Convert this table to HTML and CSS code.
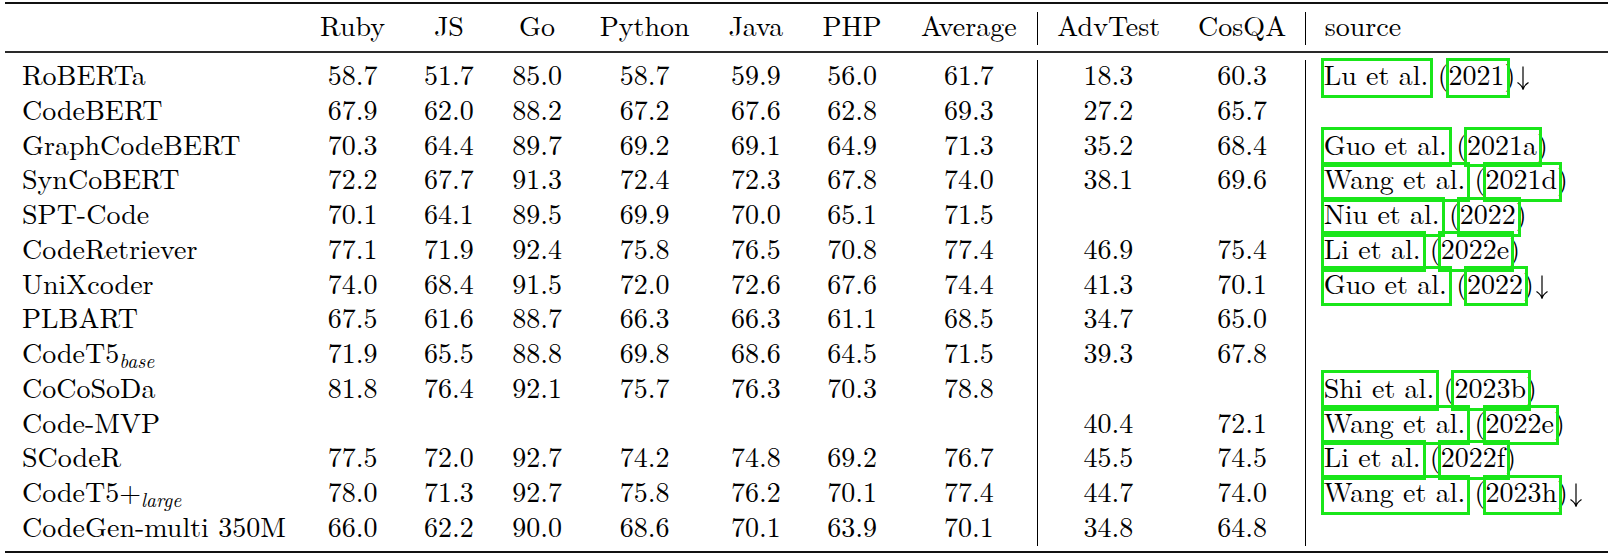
FILE: index.html
```html
<!DOCTYPE html>
<html lang="en">
<head>
<meta charset="utf-8">
<title>Code search results</title>
<link rel="stylesheet" href="styles.css">
</head>
<body>
<div class="table">
  <div class="rule rule-heavy"></div>
  <div class="thead">
    <div class="th"></div>
    <div class="th">Ruby</div>
    <div class="th">JS</div>
    <div class="th">Go</div>
    <div class="th">Python</div>
    <div class="th">Java</div>
    <div class="th">PHP</div>
    <div class="th">Average</div>
    <div class="th sep">AdvTest</div>
    <div class="th">CosQA</div>
    <div class="th sep src">source</div>
  </div>
  <div class="rule rule-mid"></div>
  <div class="tbody">
    <div class="vbar vbar1"></div>
    <div class="vbar vbar2"></div>

    <div class="n">RoBERTa</div><div class="v">58.7</div><div class="v">51.7</div><div class="v">85.0</div><div class="v">58.7</div><div class="v">59.9</div><div class="v">56.0</div><div class="v">61.7</div><div class="v">18.3</div><div class="v">60.3</div>
    <div class="s"><span class="ref">Lu et al.</span> (<span class="ref">2021</span>)<svg class="arr" viewBox="0 0 14 24" width="14" height="24"><path d="M7 0.5V23.2M1.5 16.5C4.5 18.5 6.3 20.5 7 23.5C7.7 20.5 9.5 18.5 12.5 16.5"/></svg></div>

    <div class="n">CodeBERT</div><div class="v">67.9</div><div class="v">62.0</div><div class="v">88.2</div><div class="v">67.2</div><div class="v">67.6</div><div class="v">62.8</div><div class="v">69.3</div><div class="v">27.2</div><div class="v">65.7</div>
    <div class="s"></div>

    <div class="n">GraphCodeBERT</div><div class="v">70.3</div><div class="v">64.4</div><div class="v">89.7</div><div class="v">69.2</div><div class="v">69.1</div><div class="v">64.9</div><div class="v">71.3</div><div class="v">35.2</div><div class="v">68.4</div>
    <div class="s"><span class="ref">Guo et al.</span> (<span class="ref">2021a</span>)</div>

    <div class="n">SynCoBERT</div><div class="v">72.2</div><div class="v">67.7</div><div class="v">91.3</div><div class="v">72.4</div><div class="v">72.3</div><div class="v">67.8</div><div class="v">74.0</div><div class="v">38.1</div><div class="v">69.6</div>
    <div class="s"><span class="ref">Wang et al.</span> (<span class="ref">2021d</span>)</div>

    <div class="n">SPT-Code</div><div class="v">70.1</div><div class="v">64.1</div><div class="v">89.5</div><div class="v">69.9</div><div class="v">70.0</div><div class="v">65.1</div><div class="v">71.5</div><div class="v"></div><div class="v"></div>
    <div class="s"><span class="ref">Niu et al.</span> (<span class="ref">2022</span>)</div>

    <div class="n">CodeRetriever</div><div class="v">77.1</div><div class="v">71.9</div><div class="v">92.4</div><div class="v">75.8</div><div class="v">76.5</div><div class="v">70.8</div><div class="v">77.4</div><div class="v">46.9</div><div class="v">75.4</div>
    <div class="s"><span class="ref">Li et al.</span> (<span class="ref">2022e</span>)</div>

    <div class="n">UniXcoder</div><div class="v">74.0</div><div class="v">68.4</div><div class="v">91.5</div><div class="v">72.0</div><div class="v">72.6</div><div class="v">67.6</div><div class="v">74.4</div><div class="v">41.3</div><div class="v">70.1</div>
    <div class="s"><span class="ref">Guo et al.</span> (<span class="ref">2022</span>)<svg class="arr" viewBox="0 0 14 24" width="14" height="24"><path d="M7 0.5V23.2M1.5 16.5C4.5 18.5 6.3 20.5 7 23.5C7.7 20.5 9.5 18.5 12.5 16.5"/></svg></div>

    <div class="n">PLBART</div><div class="v">67.5</div><div class="v">61.6</div><div class="v">88.7</div><div class="v">66.3</div><div class="v">66.3</div><div class="v">61.1</div><div class="v">68.5</div><div class="v">34.7</div><div class="v">65.0</div>
    <div class="s"></div>

    <div class="n">CodeT5<span class="sub">base</span></div><div class="v">71.9</div><div class="v">65.5</div><div class="v">88.8</div><div class="v">69.8</div><div class="v">68.6</div><div class="v">64.5</div><div class="v">71.5</div><div class="v">39.3</div><div class="v">67.8</div>
    <div class="s"></div>

    <div class="n">CoCoSoDa</div><div class="v">81.8</div><div class="v">76.4</div><div class="v">92.1</div><div class="v">75.7</div><div class="v">76.3</div><div class="v">70.3</div><div class="v">78.8</div><div class="v"></div><div class="v"></div>
    <div class="s"><span class="ref">Shi et al.</span> (<span class="ref">2023b</span>)</div>

    <div class="n">Code-MVP</div><div class="v"></div><div class="v"></div><div class="v"></div><div class="v"></div><div class="v"></div><div class="v"></div><div class="v"></div><div class="v">40.4</div><div class="v">72.1</div>
    <div class="s"><span class="ref">Wang et al.</span> (<span class="ref">2022e</span>)</div>

    <div class="n">SCodeR</div><div class="v">77.5</div><div class="v">72.0</div><div class="v">92.7</div><div class="v">74.2</div><div class="v">74.8</div><div class="v">69.2</div><div class="v">76.7</div><div class="v">45.5</div><div class="v">74.5</div>
    <div class="s"><span class="ref">Li et al.</span> (<span class="ref">2022f</span>)</div>

    <div class="n">CodeT5+<span class="sub">large</span></div><div class="v">78.0</div><div class="v">71.3</div><div class="v">92.7</div><div class="v">75.8</div><div class="v">76.2</div><div class="v">70.1</div><div class="v">77.4</div><div class="v">44.7</div><div class="v">74.0</div>
    <div class="s"><span class="ref">Wang et al.</span> (<span class="ref">2023h</span>)<svg class="arr" viewBox="0 0 14 24" width="14" height="24"><path d="M7 0.5V23.2M1.5 16.5C4.5 18.5 6.3 20.5 7 23.5C7.7 20.5 9.5 18.5 12.5 16.5"/></svg></div>

    <div class="n">CodeGen-multi 350M</div><div class="v">66.0</div><div class="v">62.2</div><div class="v">90.0</div><div class="v">68.6</div><div class="v">70.1</div><div class="v">63.9</div><div class="v">70.1</div><div class="v">34.8</div><div class="v">64.8</div>
    <div class="s"></div>
  </div>
  <div class="rule rule-heavy"></div>
</div>
</body>
</html>
```
FILE: styles.css
```css
html, body {
  margin: 0;
  padding: 0;
  background: #ffffff;
}

body {
  color: #000000;
  font-family: "Latin Modern Roman", "Liberation Serif", serif;
  font-size: 28px;
}

.table {
  margin: 2px 0 0 5px;
  width: 1602.8px;
}

.rule-heavy {
  height: 2px;
  background: #111111;
}

.rule-mid {
  height: 2px;
  background: #2a2a2a;
}

.thead {
  display: grid;
  grid-template-columns: 295.4px 104.4px 88.2px 88.2px 127px 95.3px 97.2px 136.4px 142.5px 125.2px 303px;
  padding-bottom: 6px;
}

.th {
  margin-top: 8px;
  height: 33px;
  line-height: 25px;
  text-align: center;
  white-space: nowrap;
}

.th.sep {
  border-left: 1px solid #000000;
}

.th.src {
  text-align: left;
  padding-left: 19px;
}

.tbody {
  display: grid;
  grid-template-columns: 295.4px 104.4px 88.2px 88.2px 127px 95.3px 97.2px 136.4px 0 142.5px 125.2px 0 303px;
  grid-template-rows: repeat(14, 34.75px);
  padding: 3.2px 0 8.2px;
  line-height: 34.75px;
}

.vbar {
  grid-row: 1 / 15;
  border-left: 1px solid #000000;
  margin: 3.8px 0 -3.3px;
}

.vbar1 {
  grid-column: 9;
}

.vbar2 {
  grid-column: 12;
}

.n {
  padding-left: 17px;
  white-space: nowrap;
}

.v {
  text-align: center;
  white-space: nowrap;
}

.s {
  padding-left: 19px;
  white-space: nowrap;
}

.sub {
  font-style: italic;
  font-size: 19.5px;
  vertical-align: -5px;
}

.ref {
  position: relative;
}

.ref::after {
  content: "";
  position: absolute;
  left: -3px;
  right: -5px;
  top: 4.5px;
  bottom: -4.8px;
  border: 3px solid #19e619;
}

.arr {
  vertical-align: -5px;
  margin-left: 1px;
}

.arr path {
  fill: none;
  stroke: #000000;
  stroke-width: 1.2;
}
```
